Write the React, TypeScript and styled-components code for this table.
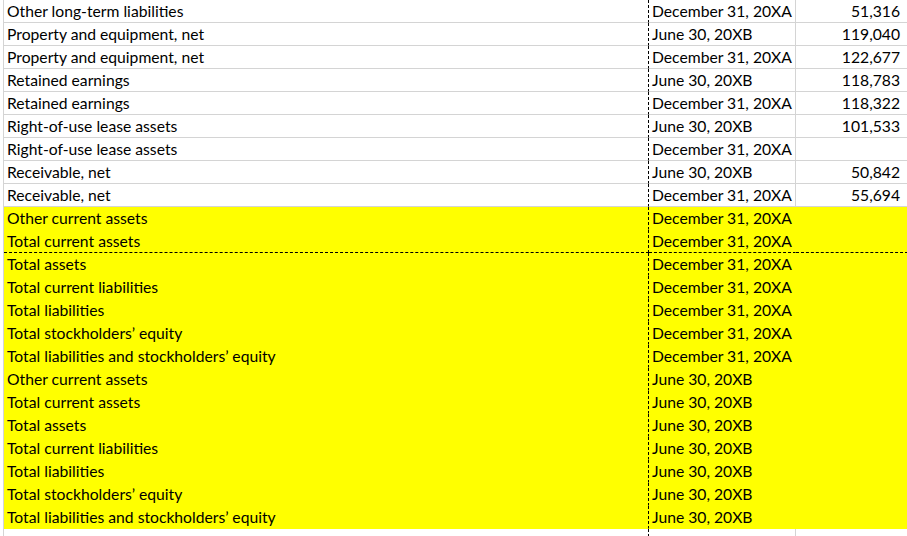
import React from 'react';
import styled, { createGlobalStyle } from 'styled-components';

const GlobalStyle = createGlobalStyle`
  html, body {
    margin: 0;
    padding: 0;
    background: #ffffff;
    overflow: hidden;
  }
`;

type Row = {
  label: string,
  date: string,
  value?: string,
  highlight?: boolean,
  pageBreak?: boolean,
}

const DEC = 'December 31, 20XA';
const JUN = 'June 30, 20XB';

const rows: Row[] = [
  { label: 'Other long-term liabilities', date: DEC, value: '51,316' },
  { label: 'Property and equipment, net', date: JUN, value: '119,040' },
  { label: 'Property and equipment, net', date: DEC, value: '122,677' },
  { label: 'Retained earnings', date: JUN, value: '118,783' },
  { label: 'Retained earnings', date: DEC, value: '118,322' },
  { label: 'Right-of-use lease assets', date: JUN, value: '101,533' },
  { label: 'Right-of-use lease assets', date: DEC },
  { label: 'Receivable, net', date: JUN, value: '50,842' },
  { label: 'Receivable, net', date: DEC, value: '55,694' },
  { label: 'Other current assets', date: DEC, highlight: true },
  { label: 'Total current assets', date: DEC, highlight: true, pageBreak: true },
  { label: 'Total assets', date: DEC, highlight: true },
  { label: 'Total current liabilities', date: DEC, highlight: true },
  { label: 'Total liabilities', date: DEC, highlight: true },
  { label: 'Total stockholders\u2019 equity', date: DEC, highlight: true },
  { label: 'Total liabilities and stockholders\u2019 equity', date: DEC, highlight: true },
  { label: 'Other current assets', date: JUN, highlight: true },
  { label: 'Total current assets', date: JUN, highlight: true },
  { label: 'Total assets', date: JUN, highlight: true },
  { label: 'Total current liabilities', date: JUN, highlight: true },
  { label: 'Total liabilities', date: JUN, highlight: true },
  { label: 'Total stockholders\u2019 equity', date: JUN, highlight: true },
  { label: 'Total liabilities and stockholders\u2019 equity', date: JUN, highlight: true }
];

const GRID = '#d4d4d4';
const FILL = '#ffff00';

const Sheet = styled.div`
  margin-left: 3px;
  width: 904px;
  height: 536px;
  overflow: hidden;
  border-left: 1px solid ${GRID};
  font-family: Lato, "Liberation Sans", sans-serif;
  font-size: 15.7px;
  color: #000000;
`;

const SheetRow = styled.div`
  display: grid;
  grid-template-columns: 645px 147px 1fr;
  height: 23px;
`;

type CellProps = {
  $highlight?: boolean,
  $pageBreak?: boolean,
  $kind: 'label' | 'date' | 'value',
}

const Cell = styled.div<CellProps>`
  box-sizing: border-box;
  height: 23px;
  line-height: 22px;
  padding: 0 ${(p) => (p.$kind === 'value' ? '8px' : '3px')};
  white-space: nowrap;
  overflow: hidden;
  text-align: ${(p) => (p.$kind === 'value' ? 'right' : 'left')};
  background: ${(p) => (p.$highlight ? FILL : '#ffffff')};
  border-bottom: 1px ${(p) => (p.$pageBreak ? 'dashed #000000' : `solid ${p.$highlight ? FILL : GRID}`)};
  border-right: ${(p) => {
    if (p.$kind === 'label') return '1px dashed #000000';
    if (p.$kind === 'date') return `1px solid ${p.$highlight ? FILL : GRID}`;
    return 'none';
  }};
`;

function Line ({ row }: { row: Row }) {
  return (
    <SheetRow>
      <Cell $highlight={row.highlight} $kind='label' $pageBreak={row.pageBreak}>{row.label}</Cell>
      <Cell $highlight={row.highlight} $kind='date' $pageBreak={row.pageBreak}>{row.date}</Cell>
      <Cell $highlight={row.highlight} $kind='value' $pageBreak={row.pageBreak}>{row.value}</Cell>
    </SheetRow>
  );
}

export default function App () {
  return (
    <>
      <GlobalStyle />
      <Sheet>
        {rows.map((row, i) => <Line key={i} row={row} />)}
        <Line row={{ label: '', date: '' }} />
      </Sheet>
    </>
  );
}
